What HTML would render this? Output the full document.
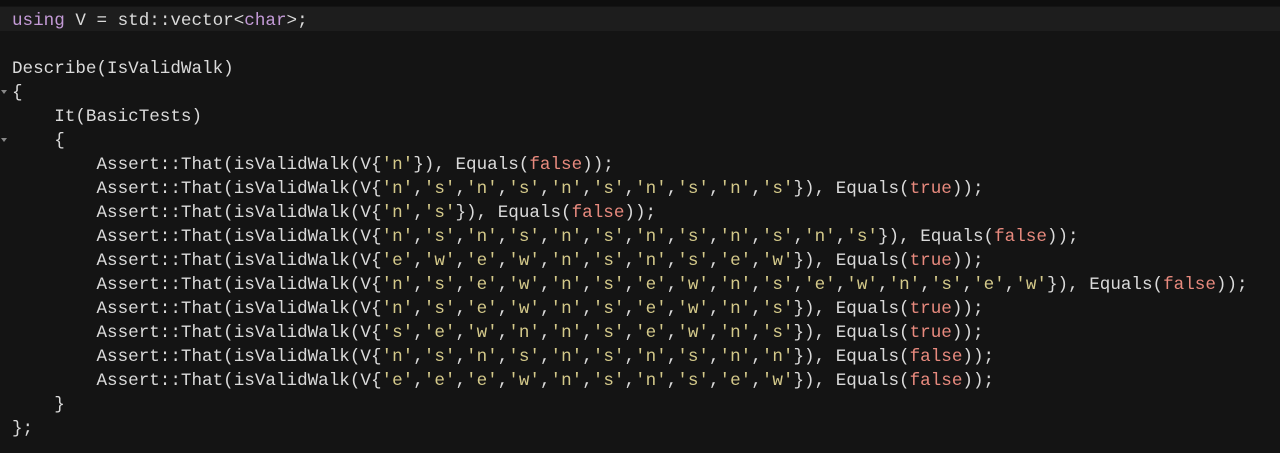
<!DOCTYPE html>
<html><head><style>
html,body{margin:0;padding:0;background:#141414;width:1280px;height:453px;overflow:hidden}
.top{position:absolute;left:0;top:0;width:1280px;height:6px;background:#0e0e0e}
.cur{position:absolute;left:0;top:7px;width:1280px;height:24px;background:#1d1d1d}
pre{position:absolute;left:12px;top:9px;margin:0;font-family:"Liberation Mono",monospace;font-size:17.6px;line-height:24px;color:#dadada;white-space:pre}
.k{color:#c39ad6}.s{color:#d4c98a}.b{color:#e88a7e}
.f{position:absolute;left:1px;width:0;height:0;border-left:3px solid transparent;border-right:3px solid transparent;border-top:4px solid #888}
</style></head><body>
<div class="top"></div><div class="cur"></div>
<div class="f" style="top:90px"></div><div class="f" style="top:138px"></div>
<pre><span class="k">using</span> V = std::vector&lt;<span class="k">char</span>&gt;;

Describe(IsValidWalk)
{
    It(BasicTests)
    {
        Assert::That(isValidWalk(V{<span class="s">'n'</span>}), Equals(<span class="b">false</span>));
        Assert::That(isValidWalk(V{<span class="s">'n'</span>,<span class="s">'s'</span>,<span class="s">'n'</span>,<span class="s">'s'</span>,<span class="s">'n'</span>,<span class="s">'s'</span>,<span class="s">'n'</span>,<span class="s">'s'</span>,<span class="s">'n'</span>,<span class="s">'s'</span>}), Equals(<span class="b">true</span>));
        Assert::That(isValidWalk(V{<span class="s">'n'</span>,<span class="s">'s'</span>}), Equals(<span class="b">false</span>));
        Assert::That(isValidWalk(V{<span class="s">'n'</span>,<span class="s">'s'</span>,<span class="s">'n'</span>,<span class="s">'s'</span>,<span class="s">'n'</span>,<span class="s">'s'</span>,<span class="s">'n'</span>,<span class="s">'s'</span>,<span class="s">'n'</span>,<span class="s">'s'</span>,<span class="s">'n'</span>,<span class="s">'s'</span>}), Equals(<span class="b">false</span>));
        Assert::That(isValidWalk(V{<span class="s">'e'</span>,<span class="s">'w'</span>,<span class="s">'e'</span>,<span class="s">'w'</span>,<span class="s">'n'</span>,<span class="s">'s'</span>,<span class="s">'n'</span>,<span class="s">'s'</span>,<span class="s">'e'</span>,<span class="s">'w'</span>}), Equals(<span class="b">true</span>));
        Assert::That(isValidWalk(V{<span class="s">'n'</span>,<span class="s">'s'</span>,<span class="s">'e'</span>,<span class="s">'w'</span>,<span class="s">'n'</span>,<span class="s">'s'</span>,<span class="s">'e'</span>,<span class="s">'w'</span>,<span class="s">'n'</span>,<span class="s">'s'</span>,<span class="s">'e'</span>,<span class="s">'w'</span>,<span class="s">'n'</span>,<span class="s">'s'</span>,<span class="s">'e'</span>,<span class="s">'w'</span>}), Equals(<span class="b">false</span>));
        Assert::That(isValidWalk(V{<span class="s">'n'</span>,<span class="s">'s'</span>,<span class="s">'e'</span>,<span class="s">'w'</span>,<span class="s">'n'</span>,<span class="s">'s'</span>,<span class="s">'e'</span>,<span class="s">'w'</span>,<span class="s">'n'</span>,<span class="s">'s'</span>}), Equals(<span class="b">true</span>));
        Assert::That(isValidWalk(V{<span class="s">'s'</span>,<span class="s">'e'</span>,<span class="s">'w'</span>,<span class="s">'n'</span>,<span class="s">'n'</span>,<span class="s">'s'</span>,<span class="s">'e'</span>,<span class="s">'w'</span>,<span class="s">'n'</span>,<span class="s">'s'</span>}), Equals(<span class="b">true</span>));
        Assert::That(isValidWalk(V{<span class="s">'n'</span>,<span class="s">'s'</span>,<span class="s">'n'</span>,<span class="s">'s'</span>,<span class="s">'n'</span>,<span class="s">'s'</span>,<span class="s">'n'</span>,<span class="s">'s'</span>,<span class="s">'n'</span>,<span class="s">'n'</span>}), Equals(<span class="b">false</span>));
        Assert::That(isValidWalk(V{<span class="s">'e'</span>,<span class="s">'e'</span>,<span class="s">'e'</span>,<span class="s">'w'</span>,<span class="s">'n'</span>,<span class="s">'s'</span>,<span class="s">'n'</span>,<span class="s">'s'</span>,<span class="s">'e'</span>,<span class="s">'w'</span>}), Equals(<span class="b">false</span>));
    }
};</pre>
</body></html>
